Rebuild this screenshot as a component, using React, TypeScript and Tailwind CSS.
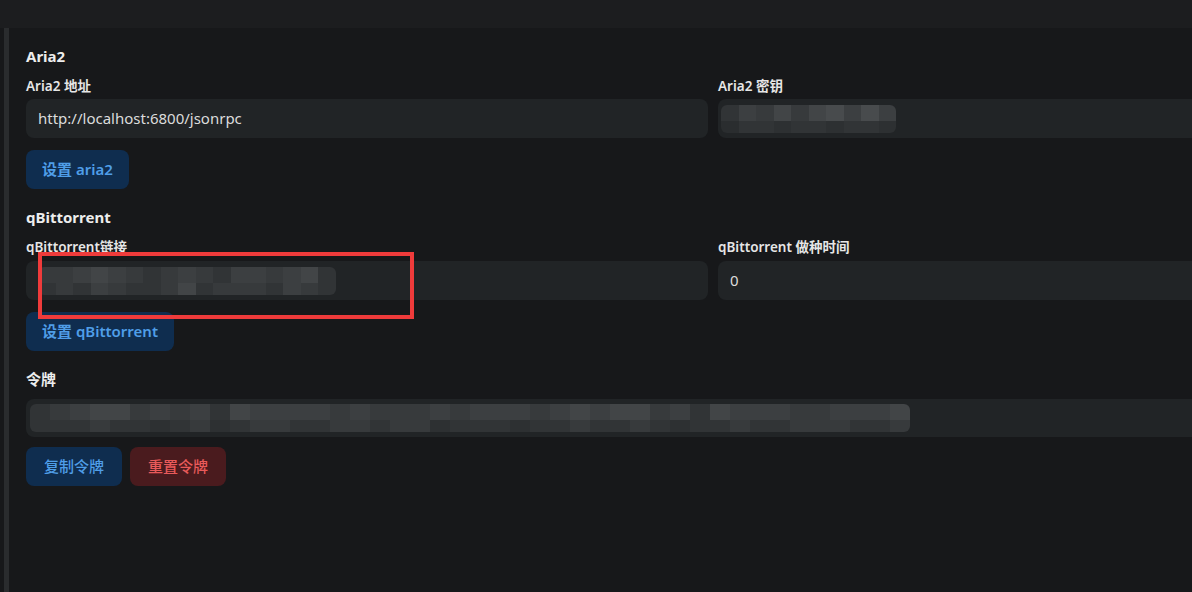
import React from "react";

const shade: Record<string, string> = {
  a: "bg-[#2a2d2f]",
  b: "bg-[#313436]",
  c: "bg-[#373a3c]",
  d: "bg-[#3c3f41]",
  e: "bg-[#424547]",
  f: "bg-[#484b4d]",
  g: "bg-[#2d3032]",
};

function Mosaic({ top, bottom, cell }: { top: string; bottom: string; cell: string }) {
  return (
    <div className="flex flex-col rounded-[6px] overflow-hidden">
      <div className="flex">
        {top.split("").map((k, i) => (
          <div key={i} className={`${cell} h-[16px] shrink-0 ${shade[k]}`} />
        ))}
      </div>
      <div className="flex">
        {bottom.split("").map((k, i) => (
          <div key={i} className={`${cell} h-[12px] shrink-0 ${shade[k]}`} />
        ))}
      </div>
    </div>
  );
}

function Label({ children }: { children: React.ReactNode }) {
  return <div className="text-[13.5px] leading-[18px] font-semibold text-[#e6e6e6] mt-[11px]">{children}</div>;
}

function Input({ children }: { children?: React.ReactNode }) {
  return (
    <div className="mt-[4px] h-[39px] rounded-[8px] bg-[#212426] flex items-center px-[12px] text-[15px] text-[#dcdcdc] overflow-hidden">
      {children}
    </div>
  );
}

function Title({ children, className = "" }: { children: React.ReactNode; className?: string }) {
  return <div className={`text-[15px] leading-[20px] font-bold text-[#ededed] ${className}`}>{children}</div>;
}

function BlueBtn({ children, className = "px-[16px] font-semibold" }: { children: React.ReactNode; className?: string }) {
  return (
    <button className={`h-[39px] rounded-[8px] bg-[#0f2d4f] text-[#4f9ee8] text-[15px] ${className}`}>
      {children}
    </button>
  );
}

export default function App() {
  return (
    <div
      className="relative w-[1192px] h-[592px] overflow-hidden bg-[#17181a] flex flex-col"
      style={{ fontFamily: '"Noto Sans", "Noto Sans CJK SC", sans-serif' }}
    >
      <div className="h-[28px] shrink-0 bg-[#1c1d1f]" />
      <div className="flex flex-1">
        <div className="w-[4px] shrink-0" />
        <div className="w-[5px] shrink-0 bg-[#2a2c2e]" />
        <div className="pl-[17px] pt-[18px] w-[1400px] shrink-0">
          <div className="w-[1374px]">
            <Title>Aria2</Title>
            <div className="grid grid-cols-2 gap-x-[10px]">
              <div>
                <Label>Aria2 地址</Label>
                <Input>http://localhost:6800/jsonrpc</Input>
              </div>
              <div>
                <Label>Aria2 密钥</Label>
                <div className="mt-[4px] h-[39px] rounded-[8px] bg-[#212426] flex items-center px-[3px]">
                  <Mosaic cell="w-[17.5px]" top="bdcecefdfd" bottom="abbgbbgbbg" />
                </div>
              </div>
            </div>
            <div className="mt-[12px]">
              <BlueBtn>设置 aria2</BlueBtn>
            </div>

            <Title className="mt-[18px]">qBittorrent</Title>
            <div className="grid grid-cols-2 gap-x-[10px]">
              <div>
                <Label>qBittorrent链接</Label>
                <div className="mt-[5px] h-[39px] rounded-[8px] bg-[#212426] flex items-center px-[12px]">
                  <Mosaic cell="w-[17.5px]" top="ccdedcbcdcbddcdeb" bottom="bcbdcbbcebcccbdcb" />
                </div>
              </div>
              <div>
                <Label>qBittorrent 做种时间</Label>
                <div className="mt-[5px] h-[39px] rounded-[8px] bg-[#212426] flex items-center px-[12px] text-[15px] text-[#dcdcdc]">
                  0
                </div>
              </div>
            </div>
            <div className="mt-[12px]">
              <BlueBtn>设置 qBittorrent</BlueBtn>
            </div>

            <Title className="mt-[18px]">令牌</Title>
            <div className="mt-[10px] h-[38px] rounded-[8px] bg-[#212426] flex items-center px-[4px]">
              <Mosaic
                cell="w-[20px]"
                top="bcdeecdcdbeddddcdcccdcdddcdedeecdbedddccddde"
                bottom="bbbcbbgbcgbccbbccbccgbbbgbbcbbcbgbbcbbcccbbc"
              />
            </div>
            <div className="mt-[10px] flex gap-[8px]">
              <BlueBtn className="px-[18px] font-medium">复制令牌</BlueBtn>
              <button className="h-[39px] px-[18px] rounded-[8px] bg-[#4a1b1e] text-[#e85a5a] text-[15px] font-medium">
                重置令牌
              </button>
            </div>
          </div>
        </div>
      </div>
      <div className="absolute left-[38px] top-[252px] w-[376px] h-[67px] border-[4px] border-[#ef3b3b] pointer-events-none" />
    </div>
  );
}
